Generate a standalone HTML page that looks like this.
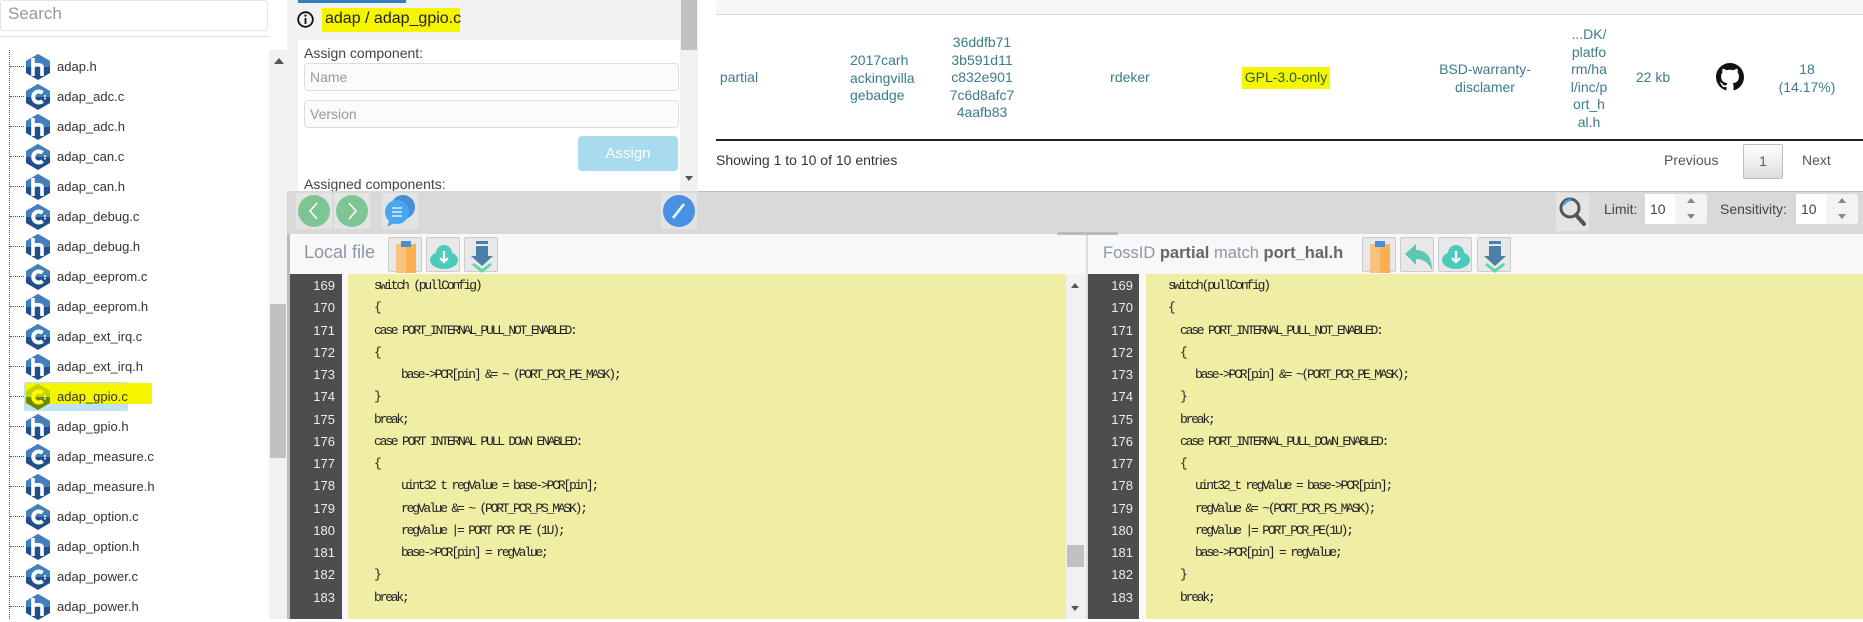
<!DOCTYPE html>
<html><head><meta charset="utf-8"><style>
*{box-sizing:border-box;margin:0;padding:0}
body{width:1863px;height:619px;overflow:hidden;position:relative;background:#fff;font-family:"Liberation Sans",sans-serif;color:#333}
.a{position:absolute}
.tree{left:0;top:0;width:269px;height:619px;background:#fff}
.item{position:absolute;left:0;height:30px;width:269px}
.item .ln{position:absolute;left:10px;top:14px;width:14px;border-top:1px dotted #555}
.item svg{position:absolute;left:24px;top:1px}
.item span{position:absolute;left:57px;top:7px;font-size:13px;color:#333}
.code{font-family:"Liberation Mono",monospace;font-size:13px;letter-spacing:-2.2px;color:#222}
.row{position:absolute;height:22.25px;line-height:22.25px;white-space:pre}
.num{color:#eee;text-align:right;font-family:"Liberation Sans",sans-serif;font-size:13px;letter-spacing:0}
.ibtn{position:absolute;width:34px;height:35px;background:#e8e8e8;border:1px solid #ccc;border-radius:2px}
.td{position:absolute;font-size:14px;color:#3a7d88;text-align:center;line-height:17.6px}
</style></head><body>

<div class="a tree">
  <div class="a" style="left:0;top:0;width:268px;height:31px;border:1px solid #e4e4e4;border-radius:3px;background:#fff"></div>
  <div class="a" style="left:8px;top:4px;font-size:17px;color:#999">Search</div>
  <div class="a" style="left:0;top:36px;width:269px;height:1px;background:#ddd"></div>
  <div class="a" style="left:9px;top:50px;height:569px;border-left:1px dotted #555"></div>
  <div id="items"></div>
</div>
<div class="a" style="left:269px;top:50px;width:18px;height:569px;background:#f1f1f1"></div>
<div class="a" style="left:274px;top:58px;width:0;height:0;border-left:5px solid transparent;border-right:5px solid transparent;border-bottom:6px solid #555"></div>
<div class="a" style="left:270px;top:304px;width:16px;height:154px;background:#c1c1c1"></div>

<div class="a" style="left:287px;top:0;width:411px;height:191px;background:#f2f2f2"></div>
<div class="a" style="left:298px;top:0;width:108px;height:3px;background:#2f7fc1"></div>
<svg class="a" style="left:297px;top:11px" width="17" height="17" viewBox="0 0 17 17"><circle cx="8.5" cy="8.5" r="7.3" fill="none" stroke="#111" stroke-width="1.8"/><rect x="7.6" y="7" width="1.8" height="6" fill="#111"/><circle cx="8.5" cy="4.6" r="1.1" fill="#111"/></svg>
<div class="a" style="left:322px;top:8px;width:138px;height:24px;background:#f5f500"></div>
<div class="a" style="left:325px;top:10px;font-size:16px;color:#222">adap / adap_gpio.c</div>
<div class="a" style="left:298px;top:40px;width:382px;height:151px;background:#fff"></div>
<div class="a" style="left:304px;top:45px;font-size:14px;color:#444">Assign component:</div>
<div class="a" style="left:304px;top:63px;width:375px;height:28px;border:1px solid #ddd;border-radius:4px;background:#fbfbfb"></div>
<div class="a" style="left:310px;top:69px;font-size:14px;color:#999">Name</div>
<div class="a" style="left:304px;top:100px;width:375px;height:28px;border:1px solid #ddd;border-radius:4px;background:#fbfbfb"></div>
<div class="a" style="left:310px;top:106px;font-size:14px;color:#999">Version</div>
<div class="a" style="left:578px;top:136px;width:100px;height:35px;border-radius:4px;background:#a8dbee;color:#fff;font-size:15px;text-align:center;line-height:35px">Assign</div>
<div class="a" style="left:304px;top:176px;font-size:14px;color:#444">Assigned components:</div>
<div class="a" style="left:680px;top:0;width:18px;height:191px;background:#f1f1f1"></div>
<div class="a" style="left:681px;top:0;width:16px;height:50px;background:#c1c1c1"></div>
<div class="a" style="left:685px;top:176px;border-left:4px solid transparent;border-right:4px solid transparent;border-top:5px solid #555"></div>

<div class="a" style="left:698px;top:0;width:1165px;height:191px;background:#fff"></div>
<div class="a" style="left:716px;top:0;width:1147px;height:15px;background:#f7f7f7;border-bottom:1px solid #ddd"></div>
<div class="a" style="left:716px;top:139px;width:1147px;height:2px;background:#222"></div>
<div class="td" style="left:718px;top:69px;width:42px">partial</div>
<div class="td" style="left:850px;top:52px;width:40px;">2017carh ackingvilla gebadge</div>
<div class="td" style="left:942px;top:34px;width:80px">36ddfb71<br>3b591d11<br>c832e901<br>7c6d8afc7<br>4aafb83</div>
<div class="td" style="left:1100px;top:69px;width:60px">rdeker</div>
<div class="a" style="left:1242px;top:67px;width:88px;height:22px;background:#f5f500"></div>
<div class="td" style="left:1242px;top:69px;width:88px;color:#2a5f20">GPL-3.0-only</div>
<div class="td" style="left:1430px;top:61px;width:110px">BSD-warranty-<br>disclamer</div>
<div class="td" style="left:1562px;top:26px;width:54px">...DK/<br>platfo<br>rm/ha<br>l/inc/p<br>ort_h<br>al.h</div>
<div class="td" style="left:1628px;top:69px;width:50px">22 kb</div>
<svg class="a" style="left:1716px;top:63px" width="28" height="28" viewBox="0 0 16 16"><path fill="#111" d="M8 0C3.58 0 0 3.58 0 8c0 3.54 2.29 6.53 5.47 7.59.4.07.55-.17.55-.38 0-.19-.01-.82-.01-1.49-2.01.37-2.53-.49-2.690-.94-.09-.23-.48-.94-.82-1.13-.28-.15-.68-.52-.01-.53.63-.01 1.08.58 1.23.82.72 1.21 1.87.87 2.33.66.07-.52.28-.87.51-1.07-1.78-.2-3.64-.89-3.64-3.95 0-.87.31-1.59.82-2.15-.08-.2-.36-1.02.08-2.12 0 0 .67-.21 2.2.82.64-.18 1.32-.27 2-.27.68 0 1.36.09 2 .27 1.53-1.04 2.2-.82 2.2-.82.44 1.1.16 1.92.08 2.12.51.56.82 1.27.82 2.15 0 3.07-1.87 3.75-3.65 3.95.29.25.54.73.54 1.48 0 1.07-.01 1.93-.01 2.2 0 .21.15.46.55.38A8.013 8.013 0 0016 8c0-4.42-3.58-8-8-8z"/></svg>
<div class="td" style="left:1772px;top:61px;width:70px">18<br>(14.17%)</div>
<div class="a" style="left:716px;top:152px;font-size:14px;color:#333">Showing 1 to 10 of 10 entries</div>
<div class="a" style="left:1664px;top:152px;font-size:14px;color:#555">Previous</div>
<div class="a" style="left:1743px;top:144px;width:40px;height:35px;border:1px solid #bbb;border-radius:2px;background:linear-gradient(#fff,#ddd);font-size:14px;color:#2e6f7c;text-align:center;line-height:33px">1</div>
<div class="a" style="left:1802px;top:152px;font-size:14px;color:#555">Next</div>

<div class="a" style="left:287px;top:191px;width:1576px;height:43px;background:#d9d9d9"></div>
<div class="a" style="left:698px;top:191px;width:1165px;height:1px;background:#bbb"></div>
<svg class="a" style="left:296px;top:193px" width="36" height="36"><rect x="0" y="0" width="36" height="36" fill="#e4e4e4" rx="2"/><circle cx="18" cy="18" r="16" fill="#7ec594"/><path d="M21 10 L14 18 L21 26" stroke="#fff" stroke-width="1.5" fill="none"/></svg>
<svg class="a" style="left:334px;top:193px" width="36" height="36"><rect x="0" y="0" width="36" height="36" fill="#e4e4e4" rx="2"/><circle cx="18" cy="18" r="16" fill="#7ec594"/><path d="M15 10 L22 18 L15 26" stroke="#fff" stroke-width="1.5" fill="none"/></svg>
<svg class="a" style="left:382px;top:193px" width="36" height="36"><rect x="0" y="0" width="36" height="36" fill="#e4e4e4" rx="2"/><circle cx="21" cy="14" r="12" fill="#4a8ed8"/><circle cx="15" cy="19" r="12" fill="#47a8f0"/><path d="M5 34 L8 26 L14 29 Z" fill="#47a8f0"/><path d="M10 15h10M10 19h10M10 23h10" stroke="#fff" stroke-width="1.3"/></svg>
<svg class="a" style="left:661px;top:193px" width="36" height="36"><rect x="0" y="0" width="36" height="36" fill="#e4e4e4" rx="2"/><circle cx="18" cy="18" r="16" fill="#4a90e2"/><path d="M12 25 L23 11" stroke="#fff" stroke-width="2.5"/><path d="M12 25 L23 11" stroke="#cfe" stroke-width="1"/></svg>
<svg class="a" style="left:1556px;top:193px" width="33" height="38"><rect width="33" height="38" fill="#e4e4e4" rx="2"/><circle cx="14" cy="15" r="9" fill="none" stroke="#555" stroke-width="3"/><path d="M8 12a7 7 0 0 1 7-5" stroke="#4aa3f0" stroke-width="2.5" fill="none"/><path d="M20 22 L28 31" stroke="#555" stroke-width="4" stroke-linecap="round"/></svg>
<div class="a" style="left:1604px;top:201px;font-size:14px;color:#444">Limit:</div>
<div class="a" style="left:1645px;top:194px;width:62px;height:30px;background:#f3f3f3;border-radius:3px"></div>
<div class="a" style="left:1645px;top:194px;width:30px;height:30px;background:#fff"></div>
<div class="a" style="left:1650px;top:201px;font-size:14px;color:#444">10</div>
<div class="a" style="left:1687px;top:198px;border-left:4px solid transparent;border-right:4px solid transparent;border-bottom:5px solid #888"></div>
<div class="a" style="left:1687px;top:214px;border-left:4px solid transparent;border-right:4px solid transparent;border-top:5px solid #888"></div>
<div class="a" style="left:1720px;top:201px;font-size:14px;color:#444">Sensitivity:</div>
<div class="a" style="left:1796px;top:194px;width:62px;height:30px;background:#f3f3f3;border-radius:3px"></div>
<div class="a" style="left:1796px;top:194px;width:30px;height:30px;background:#fff"></div>
<div class="a" style="left:1801px;top:201px;font-size:14px;color:#444">10</div>
<div class="a" style="left:1838px;top:198px;border-left:4px solid transparent;border-right:4px solid transparent;border-bottom:5px solid #888"></div>
<div class="a" style="left:1838px;top:214px;border-left:4px solid transparent;border-right:4px solid transparent;border-top:5px solid #888"></div>

<div class="a" style="left:287px;top:234px;width:3px;height:385px;background:#bbb"></div>
<div class="a" style="left:290px;top:234px;width:1573px;height:40px;background:#f8f8f8"></div>
<div class="a" style="left:1086px;top:234px;width:2px;height:40px;background:#ddd"></div>
<div class="a" style="left:1057px;top:232px;width:61px;height:3px;background:#bbb"></div>
<div class="a" style="left:304px;top:242px;font-size:18px;color:#8a96a6">Local file</div>
<div class="a" style="left:1103px;top:244px;font-size:16.5px;color:#8a96a6">FossID <b style="color:#666">partial</b> match <b style="color:#666">port_hal.h</b></div>
<div id="icons"></div>

<div class="a" style="left:290px;top:274px;width:52px;height:345px;background:#4d4d4d"></div>
<div class="a" style="left:342px;top:274px;width:6px;height:345px;background:#f8f8f8"></div>
<div class="a" style="left:348px;top:274px;width:718px;height:345px;background:#f0eda5"></div>
<div class="a" style="left:1066px;top:274px;width:20px;height:345px;background:#f1f1f1"></div>
<div class="a" style="left:1071px;top:283px;border-left:4px solid transparent;border-right:4px solid transparent;border-bottom:5px solid #555"></div>
<div class="a" style="left:1067px;top:545px;width:17px;height:22px;background:#c1c1c1"></div>
<div class="a" style="left:1071px;top:606px;border-left:4px solid transparent;border-right:4px solid transparent;border-top:5px solid #555"></div>
<div class="a" style="left:1086px;top:274px;width:2px;height:345px;background:#ddd"></div>
<div class="a" style="left:1088px;top:274px;width:51px;height:345px;background:#4d4d4d"></div>
<div class="a" style="left:1139px;top:274px;width:7px;height:345px;background:#f8f8f8"></div>
<div class="a" style="left:1146px;top:274px;width:717px;height:345px;background:#f0eda5"></div>
<div id="code"></div>

<script>
var names=["adap.h","adap_adc.c","adap_adc.h","adap_can.c","adap_can.h","adap_debug.c","adap_debug.h","adap_eeprom.c","adap_eeprom.h","adap_ext_irq.c","adap_ext_irq.h","adap_gpio.c","adap_gpio.h","adap_measure.c","adap_measure.h","adap_option.c","adap_option.h","adap_power.c","adap_power.h"];
var h="";
names.forEach(function(n,i){
 var y=52+i*30, c=n.slice(-1)=="c", sel=n=="adap_gpio.c";
 var top=sel?"#d6e000":"#4a86c5", bot=sel?"#6a8a00":"#1f4f8a";
 var glyph=c?'<path d="M18.5 10a5.5 5.5 0 1 0 0 8" stroke="'+(sel?"#ff0":"#fff")+'" stroke-width="4" fill="none"/><circle cx="21" cy="13" r="1" fill="#fff"/><circle cx="21" cy="15.5" r="1" fill="#fff"/>':'<path d="M9 5v18M9 14c0-3 9-3 9 0v9" stroke="#fff" stroke-width="3.6" fill="none"/>';
 h+='<div class="item" style="top:'+y+'px">'+(sel?'<div style="position:absolute;left:24px;top:0;width:104px;height:29px;background:#bfe3f5;border-radius:2px"></div><div style="position:absolute;left:25px;top:1px;width:127px;height:21px;background:#f5f500"></div>':'')+'<div class="ln"></div><svg width="28" height="28" viewBox="0 0 28 28"><polygon points="14,1 26,8 26,20 14,27 2,20 2,8" fill="'+bot+'"/><polygon points="14,1 26,8 26,14 2,14 2,8" fill="'+top+'" opacity="0.85"/>'+glyph+'</svg><span>'+n+'</span></div>';
});
document.getElementById("items").innerHTML=h;

function ic(x,k){
 var s='<div class="ibtn" style="left:'+x+'px;top:237px"><svg width="34" height="35" viewBox="0 0 34 35">';
 if(k==0)s+='<rect x="7" y="6" width="20" height="29" fill="#f7c27f"/><rect x="17" y="6" width="10" height="29" fill="#fbb050"/><rect x="12" y="3" width="10" height="6" fill="#4a8ed8"/>';
 if(k==1)s+='<path d="M4 16 L15 6 V12 C26 12 31 20 31 32 C27 24 22 21 15 21 V27 Z" fill="#5cc8b4"/>';
 if(k==2)s+='<ellipse cx="17" cy="22" rx="14" ry="9" fill="#4ccbbb"/><circle cx="17" cy="15" r="8" fill="#4ccbbb"/><path d="M17 13v11M13 20l4 4 4-4" stroke="#fff" stroke-width="2.2" fill="none"/>';
 if(k==3)s+='<rect x="11" y="3" width="12" height="3" fill="#4a7fa8"/><path d="M11 8h12v10h5L17 28 6 18h5z" fill="#4a7fa8"/><path d="M8 26l9 7 9-7" stroke="#5fd6a8" stroke-width="3" fill="none"/>';
 return s+'</svg></div>';
}
document.getElementById("icons").innerHTML=ic(388,0)+ic(426,2)+ic(464,3)+ic(1362,0)+ic(1400,1)+ic(1438,2)+ic(1477,3);

var L=[[1,"switch (pullConfig)"],[1,"{"],[1,"case PORT_INTERNAL_PULL_NOT_ENABLED:"],[1,"{"],[2,"base->PCR[pin] &= ~ (PORT_PCR_PE_MASK);"],[1,"}"],[1,"break;"],[1,"case PORT INTERNAL PULL DOWN ENABLED:"],[1,"{"],[2,"uint32 t regValue = base->PCR[pin];"],[2,"regValue &= ~ (PORT_PCR_PS_MASK);"],[2,"regValue |= PORT PCR PE (1U);"],[2,"base->PCR[pin] = regValue;"],[1,"}"],[1,"break;"]];
var R=[[0,"switch(pullConfig)"],[0,"{"],[1,"case PORT_INTERNAL_PULL_NOT_ENABLED:"],[1,"{"],[2,"base->PCR[pin] &= ~(PORT_PCR_PE_MASK);"],[1,"}"],[1,"break;"],[1,"case PORT_INTERNAL_PULL_DOWN_ENABLED:"],[1,"{"],[2,"uint32_t regValue = base->PCR[pin];"],[2,"regValue &= ~(PORT_PCR_PS_MASK);"],[2,"regValue |= PORT_PCR_PE(1U);"],[2,"base->PCR[pin] = regValue;"],[1,"}"],[1,"break;"]];
var c="";
function esc(s){return s.replace(/&/g,"&amp;").replace(/</g,"&lt;").replace(/>/g,"&gt;")}
for(var i=0;i<15;i++){
 var y=275+i*22.25;
 c+='<div class="row num" style="left:290px;top:'+y+'px;width:45px">'+(169+i)+'</div>';
 c+='<div class="row num" style="left:1088px;top:'+y+'px;width:45px">'+(169+i)+'</div>';
 c+='<div class="row code" style="left:'+(374+(L[i][0]-1)*27)+'px;top:'+y+'px">'+esc(L[i][1])+'</div>';
 c+='<div class="row code" style="left:'+(1168+R[i][0]*12+(R[i][0]==2?3:0))+'px;top:'+y+'px">'+esc(R[i][1])+'</div>';
}
document.getElementById("code").innerHTML=c;
</script>
</body></html>
